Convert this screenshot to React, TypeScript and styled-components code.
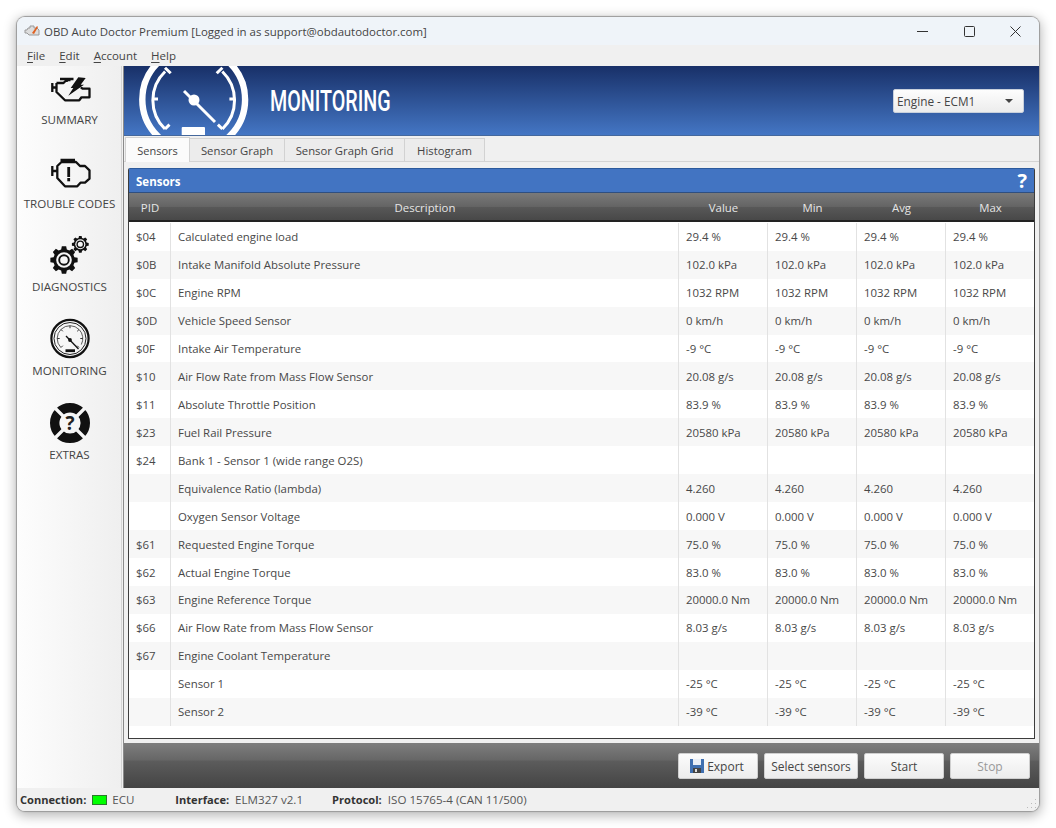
import React from "react";
import styled, { createGlobalStyle } from "styled-components";

const Global = createGlobalStyle`
  html, body { margin: 0; padding: 0; background: #fff; }
  body { font-family: "Open Sans", "Noto Sans", sans-serif; font-size: 12px; color: #444; }
  #root { width: 1056px; height: 828px; padding: 17px; box-sizing: border-box; overflow: hidden; }
`;

const Window = styled.div`
  width: 1022px; height: 794px; border-radius: 8px; overflow: hidden; background: #f0f0f0;
  display: flex; flex-direction: column;
  box-shadow: 0 0 1px 1px #9a9a9a, 0 3px 12px 2px rgba(0,0,0,.28);
`;
const TitleBar = styled.div`
  height: 28px; flex: none; background: #eff4f9; display: flex; align-items: center; padding-left: 7px;
`;
const TitleText = styled.span`
  font-size: 11.46px; color: #444; margin-left: 3px; flex: 1; white-space: nowrap;
`;
const WinButtons = styled.div`display: flex; height: 28px;`;
const WinButton = styled.div`
  width: 46.5px; display: flex; align-items: center; justify-content: center;
`;
const MenuBar = styled.div`
  height: 21px; flex: none; display: flex; gap: 14px; padding-left: 10px; align-items: center;
  background: #f0f0f0; box-sizing: border-box; font-size: 11.5px; color: #444;
  u { text-underline-offset: 2px; }
`;
const Body = styled.div`flex: 1; display: flex; min-height: 0;`;
const Sidebar = styled.nav`
  width: 105px; flex: none; box-sizing: border-box; padding-left: 1px; background: linear-gradient(90deg, #fdfdfd, #efefef);
  border-right: 1px solid #d4d4d4; display: flex; flex-direction: column; margin-right: 1px;
`;
const NavItem = styled.div`
  height: 83.7px; display: flex; flex-direction: column; align-items: center; flex: none;
  font-size: 11.6px; color: #444; white-space: nowrap;
  svg { display: block; height: 46px; flex: none; }
  span { line-height: 16px; }
`;
const Main = styled.main`flex: 1; display: flex; flex-direction: column; min-width: 0; background: #f0f0f0; border-left: 1px solid #8a8a8a;`;
const Banner = styled.header`
  height: 70px; flex: none; box-sizing: border-box; border-bottom: 1px solid #45689c; position: relative;
  background: linear-gradient(180deg, #183068, #4476c4); display: flex; align-items: center; overflow: hidden;
`;
const BannerIcon = styled.svg`width: 130px; height: 69px; flex: none; display: block;`;
const BannerTitle = styled.h1`
  margin: 0 0 0 16px; font: 500 30px "Roboto", sans-serif; color: #fff; width: 121px; white-space: nowrap;
  transform: scaleX(.656); transform-origin: left center;
`;
const Select = styled.div`
  margin-left: auto; margin-right: 15px; width: 131px; height: 24px; box-sizing: border-box; border-radius: 2px;
  background: linear-gradient(180deg, #fdfdfd, #ececec); border: 1px solid #c8d0dc; display: flex; align-items: center;
  padding: 1px 8px 0 3px; justify-content: space-between; font-size: 11.8px; color: #444;
`;
const Caret = styled.i`
  width: 0; height: 0; border-left: 4px solid transparent; border-right: 4px solid transparent; border-top: 4px solid #444;
  margin-right: 2px;
`;
const TabStrip = styled.div`
  height: 26px; flex: none; box-sizing: border-box; padding: 2px 0 0 1px; display: flex; border-bottom: 1px solid #d4d4d4;
  align-items: flex-end;
`;
const Tab = styled.div<{ $active?: boolean; $w: number }>`
  height: ${p => (p.$active ? 25 : 23)}px; box-sizing: border-box; display: flex; align-items: center; justify-content: center;
  width: ${p => p.$w}px; font-size: ${p => (p.$active ? 11 : 11.3)}px; color: #444;
  border: 1px solid #d2d2d2; border-bottom: none; margin-right: -1px;
  background: ${p => (p.$active ? "#fbfbfb" : "#ececec")};
  position: relative; ${p => p.$active && "margin-bottom: -1px; z-index: 1;"}
`;
const Panel = styled.section`
  flex: 1; min-height: 0; margin: 6px 4px 4px; border: 1px solid #3c3c3c; border-top-color: #2c5a9c; border-radius: 2px 2px 0 0;
  background: #fff; display: flex; flex-direction: column;
`;
const PanelTitle = styled.div`
  height: 24px; flex: none; background: #4274c2; color: #fff; font-weight: 700; font-size: 11.5px; display: flex;
  align-items: center; justify-content: space-between; padding: 1px 7px 0; box-sizing: border-box;
  border-bottom: 1px solid #2f4f80;
`;
const Help = styled.span`font-size: 20px; font-weight: 700; line-height: 1;`;
const HeadRow = styled.div`
  height: 29px; flex: none; display: grid; grid-template-columns: 42px 508px 89px 89px 89px 89px;
  background: linear-gradient(180deg, #7a7a7a 0%, #646464 50%, #585858 52%, #484848 100%);
  color: #e6e6e6; font-size: 11.4px; align-items: center; box-sizing: border-box; border-bottom: 2px solid #222; padding-top: 2px;
`;
const HeadCell = styled.div`text-align: center;`;
const Rows = styled.div`flex: 1; min-height: 0; padding-top: .8px;`;
const Row = styled.div<{ $alt: boolean }>`
  height: 27.95px; display: grid; grid-template-columns: 42px 508px 89px 89px 89px 89px;
  background: ${p => (p.$alt ? "#f7f7f7" : "#fff")};
`;
const Cell = styled.div`
  padding-left: 7px; display: flex; align-items: center; font-size: 11.4px; color: #484848; white-space: nowrap;
  border-right: 1px solid #e2e2e2; box-sizing: border-box;
  &:last-child { border-right: none; }
`;
const Footer = styled.div`
  height: 45px; flex: none; box-sizing: border-box; padding: 10px 9px 0 0; display: flex; justify-content: flex-end; gap: 6px;
  background: linear-gradient(180deg, #7e7e7e 0%, #666 38%, #5c5c5c 40%, #444 100%);
`;
const Btn = styled.button<{ $w: number; $off?: boolean; $icon?: boolean }>`
  width: ${p => p.$w}px; height: 26px; padding: 0 ${p => (p.$icon ? 2 : 0)}px 0 0; border: 1px solid #cfcfcf; border-radius: 2px; display: flex;
  align-items: center; justify-content: center; gap: 3px; font: 12px "Open Sans", sans-serif;
  color: ${p => (p.$off ? "#999" : "#444")}; background: linear-gradient(180deg, #fcfcfc, #ececec);
`;
const StatusBar = styled.footer`
  height: 23px; flex: none; background: #f0f0f0; display: flex; align-items: center; padding-left: 3px; font-size: 11.6px;
  color: #555; position: relative; white-space: nowrap;
`;
const StatusLabel = styled.b`font-weight: 700; font-size: 11.1px; color: #333; margin-right: 6px;`;
const StatusValue = styled.span<{ $w?: number }>`${p => (p.$w ? `width: ${p.$w}px;` : "")}`;
const Led = styled.i`
  width: 13px; height: 8px; background: #0f0; border: 1px solid #2a7a2a; margin-right: 5px; display: block; box-sizing: content-box;
`;
const Grip = styled.svg`position: absolute; right: 1px; bottom: 1px; width: 12px; height: 12px;`;

const AppIcon = () => (
  <svg width="17" height="14" viewBox="0 0 17 14">
    <path d="M1 6h2l1-2h2V2h4v2h3l2 2v5H5L3 9H1z" fill="#ddd" stroke="#999" strokeWidth="1" />
    <path d="M8 9l5-7 1 1-4 7z" fill="#e06020" />
  </svg>
);

const SummaryIcon = () => (
  <svg width="44" height="46" viewBox="0 0 44 46">
    <g fill="none" stroke="#111" strokeWidth="2.300" strokeLinejoin="round">
      <path d="M4.300 17v9M4.300 21.500H8.500" />
      <path d="M8.500 17v9l8.500 8.300H31.300l2.200-3h8V22.700H34.500l-2.500-2" />
      <path d="M8.500 17h7l3-3h4" />
      <path d="M12 13H25.500M18.500 13v3" strokeWidth="2.600" />
    </g>
    <path d="M30.300 11.300L37.700 12L32.700 18.700H36L20.300 29.700L25.300 22H22.700z" fill="#111" stroke="#f4f4f4" strokeWidth="1" strokeLinejoin="round" paintOrder="stroke" />
  </svg>
);
const CodesIcon = () => (
  <svg width="44" height="46" viewBox="0 0 44 46">
    <g fill="none" stroke="#111" strokeWidth="2.300" strokeLinejoin="round">
      <path d="M4.300 16v10M4.300 21H9.300" />
      <path d="M9.300 16L13.500 12H28L32 16H37L41.500 20.300V28.700L37 32.700H32.500L29.300 36.300H17L9.300 28z" />
      <path d="M12.500 10H27" strokeWidth="2.600" />
    </g>
    <rect x="19.300" y="17" width="2.800" height="10" fill="#111" />
    <rect x="19.300" y="28" width="2.800" height="3.300" fill="#111" />
  </svg>
);
const gearPath = (cx: number, cy: number, ro: number, ri: number, n: number) => {
  let d = "";
  for (let i = 0; i < n; i++) {
    const s = (Math.PI * 2) / n;
    const a = i * s;
    const pts = [a - s * .34, a - s * .2, a + s * .2, a + s * .34];
    const rs = [ri, ro, ro, ri];
    pts.forEach((p, k) => {
      d += `${i === 0 && k === 0 ? "M" : "L"}${(cx + rs[k] * Math.cos(p)).toFixed(2)} ${(cy + rs[k] * Math.sin(p)).toFixed(2)}`;
    });
  }
  return d + "Z";
};
const DiagIcon = () => (
  <svg width="44" height="46" viewBox="0 0 44 46">
    <path d={gearPath(16, 27, 13.8, 10.8, 8)} fill="#111" />
    <circle cx="16" cy="27" r="7.800" fill="#f7f7f7" />
    <circle cx="16" cy="27" r="4.800" fill="none" stroke="#111" strokeWidth="1.900" />
    <path d={gearPath(32.3, 11.3, 8.5, 6.6, 8)} fill="#111" />
    <circle cx="32.300" cy="11.300" r="5" fill="#f7f7f7" />
    <circle cx="32.300" cy="11.300" r="3.200" fill="none" stroke="#111" strokeWidth="1.400" />
  </svg>
);
const MonIcon = () => (
  <svg width="44" height="46" viewBox="0 0 44 46">
    <circle cx="22" cy="21.500" r="18.600" fill="none" stroke="#111" strokeWidth="2.200" />
    <circle cx="22" cy="21.500" r="16" fill="none" stroke="#222" strokeWidth="1" />
    <circle cx="22" cy="21.500" r="12.800" fill="none" stroke="#555" strokeWidth=".9" pathLength="100" strokeDasharray="70 30" transform="rotate(136 22 21.500)" />
    <path d="M22 8.700v2.500M9.200 21.500h2.500M34.800 21.500h-2.500M13 12.500l1.800 1.800M31 12.500l-1.800 1.800M13 30.500l1.800-1.800M31 30.500l-1.800-1.800" stroke="#333" strokeWidth="1" />
    <path d="M18 19L30.500 32" stroke="#111" strokeWidth="1.300" />
    <circle cx="22" cy="23" r="1.900" fill="#111" />
    <rect x="17.500" y="32.300" width="9.500" height="2.800" fill="#111" />
  </svg>
);
const ExtrasIcon = () => (
  <svg width="44" height="46" viewBox="0 0 44 46">
    <circle cx="22" cy="22" r="15.300" fill="none" stroke="#111" strokeWidth="9.400" />
    <g stroke="#f6f6f6" strokeWidth="3.200">
      <path d="M6.500 6.500l9.500 9.500M37.500 6.500L28 16M6.500 37.500l9.500-9.500M37.500 37.500L28 28" />
    </g>
    <text x="22" y="29.300" textAnchor="middle" fontFamily="Open Sans, sans-serif" fontWeight="700" fontSize="19" fill="#222">?</text>
  </svg>
);
const BannerGauge = () => (
  <BannerIcon viewBox="0 0 130 69">
    <g fill="none" stroke="#fff">
      <circle cx="69.700" cy="33.500" r="51.400" strokeWidth="6.400" />
      <path d="M41.100 5.500A40 40 0 0 0 41 63" strokeWidth="3" />
      <path d="M98.300 5.500A40 40 0 0 1 98.400 63" strokeWidth="3" />
      <path d="M41 1.700L46.700 7.300M28 33h6M98.400 1.700L92.700 7.300M111.400 33h-6M41 63l4.500-4.300M98.400 63l-4.500-4.300" strokeWidth="3" />
      <path d="M60 25L91 56" strokeWidth="3" />
    </g>
    <circle cx="70" cy="34" r="5.500" fill="#fff" />
    <rect x="57.700" y="61" width="23.300" height="9" rx="1" fill="#fff" />
  </BannerIcon>
);
const FloppyIcon = () => (
  <svg width="14" height="16" viewBox="0 0 14 16">
    <rect x="0" y="1" width="14" height="14" fill="#3f6fb0" />
    <rect x="3" y="1" width="8" height="6" fill="#e8eef6" />
    <rect x="3" y="10" width="8" height="5" fill="#444" />
    <rect x="5" y="11" width="2" height="3" fill="#ddd" />
  </svg>
);

const nav = [
  { label: "SUMMARY", icon: <SummaryIcon /> },
  { label: "TROUBLE CODES", icon: <CodesIcon /> },
  { label: "DIAGNOSTICS", icon: <DiagIcon /> },
  { label: "MONITORING", icon: <MonIcon /> },
  { label: "EXTRAS", icon: <ExtrasIcon /> },
];
const tabs: [string, number][] = [["Sensors", 65], ["Sensor Graph", 96], ["Sensor Graph Grid", 121], ["Histogram", 81]];
const same = (pid: string, d: string, v: string) => [pid, d, v, v, v, v];
const rows = [
  same("$04", "Calculated engine load", "29.4 %"),
  same("$0B", "Intake Manifold Absolute Pressure", "102.0 kPa"),
  same("$0C", "Engine RPM", "1032 RPM"),
  same("$0D", "Vehicle Speed Sensor", "0 km/h"),
  same("$0F", "Intake Air Temperature", "-9 °C"),
  same("$10", "Air Flow Rate from Mass Flow Sensor", "20.08 g/s"),
  same("$11", "Absolute Throttle Position", "83.9 %"),
  same("$23", "Fuel Rail Pressure", "20580 kPa"),
  same("$24", "Bank 1 - Sensor 1 (wide range O2S)", ""),
  same("", "Equivalence Ratio (lambda)", "4.260"),
  same("", "Oxygen Sensor Voltage", "0.000 V"),
  same("$61", "Requested Engine Torque", "75.0 %"),
  same("$62", "Actual Engine Torque", "83.0 %"),
  same("$63", "Engine Reference Torque", "20000.0 Nm"),
  same("$66", "Air Flow Rate from Mass Flow Sensor", "8.03 g/s"),
  same("$67", "Engine Coolant Temperature", ""),
  same("", "Sensor 1", "-25 °C"),
  same("", "Sensor 2", "-39 °C"),
];

export default function App() {
  return (
    <>
      <Global />
      <Window>
        <TitleBar>
          <AppIcon />
          <TitleText>OBD Auto Doctor Premium [Logged in as support@obdautodoctor.com]</TitleText>
          <WinButtons>
            <WinButton><svg width="11" height="11" viewBox="0 0 11 11"><path d="M0 5.500h11" stroke="#333" /></svg></WinButton>
            <WinButton><svg width="11" height="11" viewBox="0 0 11 11"><rect x=".5" y=".5" width="10" height="10" rx="1" fill="none" stroke="#333" /></svg></WinButton>
            <WinButton><svg width="11" height="11" viewBox="0 0 11 11"><path d="M.5.5l10 10M10.500.5l-10 10" stroke="#333" /></svg></WinButton>
          </WinButtons>
        </TitleBar>
        <MenuBar>
          <span><u>F</u>ile</span>
          <span><u>E</u>dit</span>
          <span><u>A</u>ccount</span>
          <span><u>H</u>elp</span>
        </MenuBar>
        <Body>
          <Sidebar>
            {nav.map(n => (
              <NavItem key={n.label}>{n.icon}<span>{n.label}</span></NavItem>
            ))}
          </Sidebar>
          <Main>
            <Banner>
              <BannerGauge />
              <BannerTitle>MONITORING</BannerTitle>
              <Select>Engine - ECM1<Caret /></Select>
            </Banner>
            <TabStrip>
              {tabs.map(([t, w], i) => <Tab key={t} $active={i === 0} $w={w}>{t}</Tab>)}
            </TabStrip>
            <Panel>
              <PanelTitle>Sensors<Help>?</Help></PanelTitle>
              <HeadRow>
                {["PID", "Description", "Value", "Min", "Avg", "Max"].map(h => <HeadCell key={h}>{h}</HeadCell>)}
              </HeadRow>
              <Rows>
                {rows.map((r, i) => (
                  <Row key={i} $alt={i % 2 === 1}>
                    {r.map((c, j) => <Cell key={j}>{c}</Cell>)}
                  </Row>
                ))}
              </Rows>
            </Panel>
            <Footer>
              <Btn $w={80} $icon><FloppyIcon />Export</Btn>
              <Btn $w={94}>Select sensors</Btn>
              <Btn $w={80}>Start</Btn>
              <Btn $w={80} $off>Stop</Btn>
            </Footer>
          </Main>
        </Body>
        <StatusBar>
          <StatusLabel>Connection:</StatusLabel>
          <Led />
          <StatusValue $w={63}>ECU</StatusValue>
          <StatusLabel>Interface:</StatusLabel>
          <StatusValue $w={97}>ELM327 v2.1</StatusValue>
          <StatusLabel>Protocol:</StatusLabel>
          <StatusValue>ISO 15765-4 (CAN 11/500)</StatusValue>
          <Grip viewBox="0 0 12 12" fill="#bbb">
            <rect x="9" y="1" width="1" height="1" /><rect x="9" y="5" width="1" height="1" /><rect x="5" y="5" width="1" height="1" />
            <rect x="9" y="9" width="1" height="1" /><rect x="5" y="9" width="1" height="1" /><rect x="1" y="9" width="1" height="1" />
          </Grip>
        </StatusBar>
      </Window>
    </>
  );
}
